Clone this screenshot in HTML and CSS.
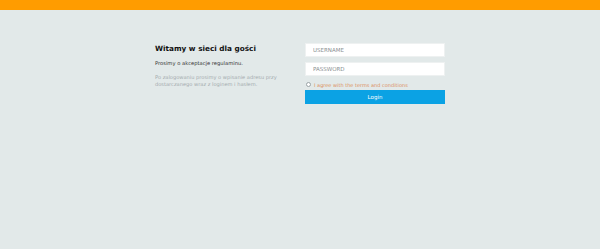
FILE: index.html
```html
<!DOCTYPE html>
<html lang="pl">
<head>
    <meta charset="UTF-8">
    <meta name="viewport" content="width=device-width, initial-scale=1.0">
    <title>Witamy</title>
    <link rel="stylesheet" href="styles.css">
</head>
<body>
    <div class="topbar"></div>

    <div class="wrapper">
        <div class="info">
            <h1 class="title">Witamy w sieci dla gości</h1>
            <p class="lead">Prosimy o akceptacje regulaminu.</p>
            <p class="note">Po zalogowaniu prosimy o wpisanie adresu przy dostarczanego wraz z loginem i hasłem.</p>
        </div>

        <form class="login">
            <input class="field" type="text" placeholder="USERNAME">
            <input class="field" type="password" placeholder="PASSWORD">
            <label class="terms">
                <span class="radio"></span>
                I agree with the terms and conditions
            </label>
            <button class="btn-login" type="button">Login</button>
        </form>
    </div>
</body>
</html>
```

FILE: styles.css
```css
* {
    margin: 0;
    padding: 0;
    box-sizing: border-box;
}

body {
    font-family: 'DejaVu Sans', Verdana, sans-serif;
    background: #e2e9e9;
    min-height: 100vh;
}

.topbar {
    height: 10px;
    background: #ff9c00;
}

.wrapper {
    width: 290px;
    margin: 33px auto 0;
    display: flex;
}

.info {
    width: 150px;
    padding-top: 1px;
}

.title {
    font-size: 7.3px;
    font-weight: bold;
    color: #111;
    margin-bottom: 7px;
}

.lead {
    font-size: 5.2px;
    color: #333;
    margin-bottom: 8px;
}

.note {
    font-size: 5.1px;
    line-height: 7px;
    color: #a3abae;
    width: 130px;
}

.login {
    width: 140px;
    display: flex;
    flex-direction: column;
}

.field {
    height: 14px;
    border: 1px solid #eef1f1;
    background: #fff;
    padding: 0 7px;
    font-family: inherit;
    font-size: 5.5px;
    margin-bottom: 5px;
    outline: none;
}

.field::placeholder {
    color: #8a9092;
}

.terms {
    display: flex;
    align-items: center;
    gap: 3px;
    font-size: 5px;
    color: #dc8f60;
    margin: 0 0 2px 1px;
    height: 7px;
}

.radio {
    width: 5px;
    height: 5px;
    border: 1px solid #9aa3a6;
    border-radius: 50%;
    background: #fff;
}

.btn-login {
    height: 14px;
    border: none;
    background: #0ba2e4;
    color: #fff;
    font-family: inherit;
    font-size: 5.5px;
    cursor: pointer;
}
```
